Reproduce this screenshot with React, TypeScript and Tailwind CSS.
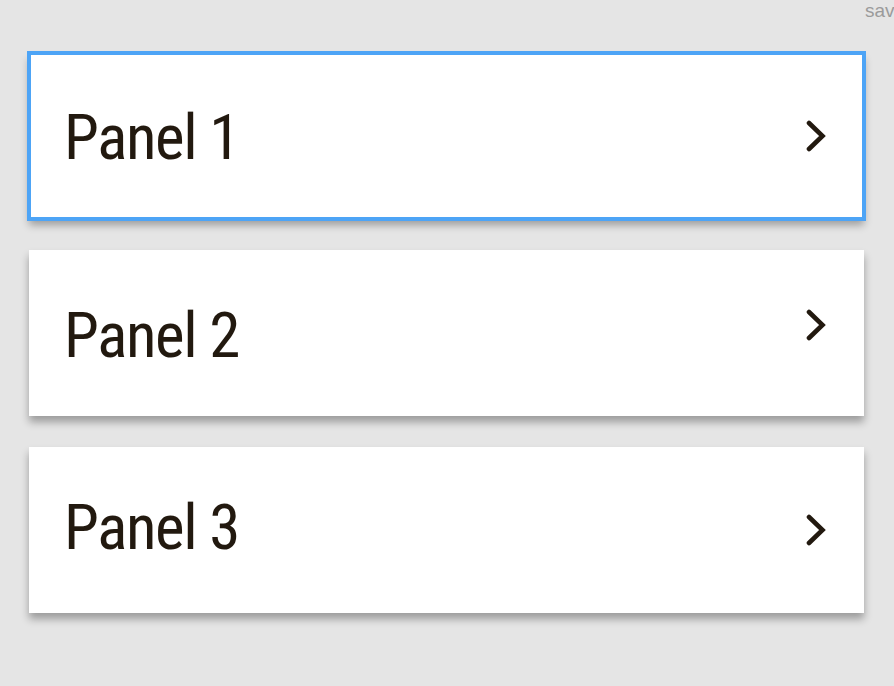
function Chevron({ className = '' }: { className?: string }) {
  return (
    <svg
      className={className}
      width="20"
      height="32"
      viewBox="0 0 20 32"
      fill="none"
      stroke="#22190f"
      strokeWidth="4.6"
      strokeLinecap="round"
      strokeLinejoin="miter"
    >
      <polyline points="3,3 16.5,16 3,29" />
    </svg>
  );
}

export default function App() {
  return (
    <div className="relative h-[686px] w-[894px] overflow-hidden bg-[#e5e5e5]">
      <span className="absolute left-[865px] top-[-3px] whitespace-nowrap font-['Liberation_Sans',sans-serif] text-[19px] text-[#9b9b9b]">
        saved
      </span>
      <div className="flex flex-col gap-[31px] pl-[29px] pr-[30px] pt-[53px]">
        <div className="flex h-[166px] items-center justify-between bg-white pl-[35px] pr-[38px] shadow-[0_6px_8px_rgba(0,0,0,0.32)] outline-4 outline-[#4da4f6] -outline-offset-2">
          <span className="mt-[2px] font-['Roboto_Condensed','Roboto',sans-serif] text-[63px] leading-none tracking-[-1.4px] text-[#22190f]">
            Panel 1
          </span>
          <Chevron />
        </div>
        <div className="flex h-[166px] items-center justify-between bg-white pl-[35px] pr-[38px] shadow-[0_6px_8px_rgba(0,0,0,0.32)]">
          <span className="mt-[4px] font-['Roboto_Condensed','Roboto',sans-serif] text-[63px] leading-none tracking-[-1.4px] text-[#22190f]">
            Panel 2
          </span>
          <Chevron className="mb-[16px]" />
        </div>
        <div className="flex h-[166px] items-center justify-between bg-white pl-[35px] pr-[38px] shadow-[0_6px_8px_rgba(0,0,0,0.32)]">
          <span className="mb-[6px] font-['Roboto_Condensed','Roboto',sans-serif] text-[63px] leading-none tracking-[-1.4px] text-[#22190f]">
            Panel 3
          </span>
          <Chevron />
        </div>
      </div>
    </div>
  );
}
